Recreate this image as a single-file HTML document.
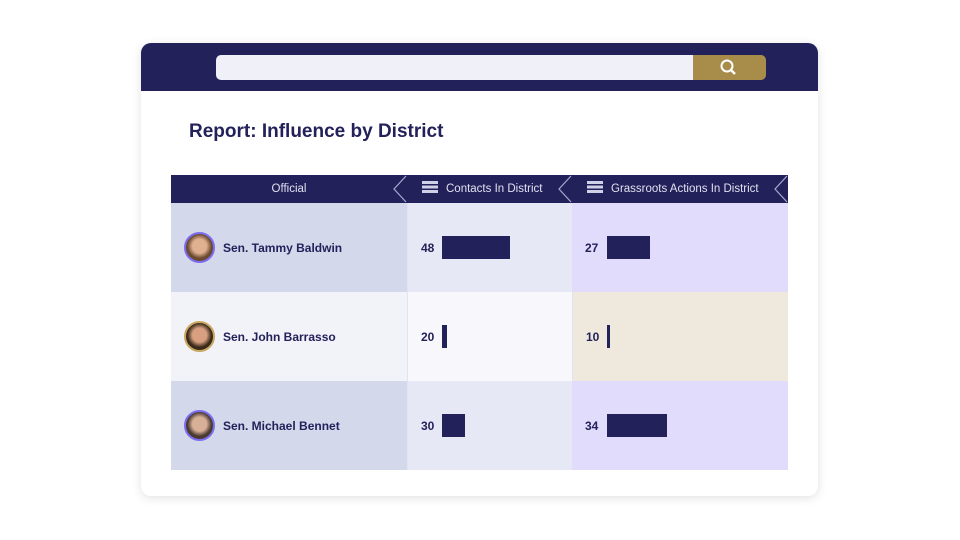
<!DOCTYPE html>
<html><head><style>
*{margin:0;padding:0;box-sizing:border-box}
body{width:960px;height:540px;background:#fff;position:relative;font-family:"Liberation Sans",sans-serif;overflow:hidden}
.card{position:absolute;left:141px;top:43px;width:677px;height:453px;border-radius:10px;background:#fff;box-shadow:0 2px 10px rgba(0,0,0,.12);overflow:hidden}
.top{position:absolute;left:0;top:0;width:100%;height:48px;background:#23215a}
.search{position:absolute;left:75px;top:12px;width:477px;height:25px;background:#f0f0f9;border-radius:5px 0 0 5px}
.btn{position:absolute;left:552px;top:12px;width:73px;height:25px;background:#a88d4a;border-radius:0 5px 5px 0}
h1{position:absolute;left:48px;top:78px;font-size:19px;color:#23215a;font-weight:bold}
.hd{position:absolute;top:175px;height:28px;background:#23215a;color:#e0e0f0;font-size:11.5px;line-height:28px}
.cell{position:absolute;display:flex;align-items:center;font-size:12px;font-weight:bold;color:#23215a}
.bar{position:absolute;background:#23215a;height:23px}
.av{width:31px;height:31px;border-radius:50%;border:2px solid #7b6cf0;margin:0 8px 0 13px;background:radial-gradient(circle at 50% 45%,#e0b090 0 35%,#6b4a30 60%)}
.menu{display:inline-block;width:16px;height:12px;vertical-align:-1px;margin-right:8px;background:linear-gradient(#d0d0e8 0 3px,transparent 3px 4.5px,#d0d0e8 4.5px 7.5px,transparent 7.5px 9px,#d0d0e8 9px 12px)}
</style></head><body>
<div class="card">
<div class="top"><div class="search"></div><div class="btn">
<svg width="73" height="25"><circle cx="34" cy="11" r="5.5" fill="none" stroke="#fff" stroke-width="2"/><line x1="38" y1="15" x2="42" y2="19" stroke="#fff" stroke-width="2.4"/></svg></div></div>
<h1>Report: Influence by District</h1>
</div>
<div class="hd" style="left:171px;width:236px;text-align:center">Official</div>
<div class="hd" style="left:407px;width:165px;padding-left:15px"><span class="menu"></span>Contacts In District</div>
<div class="hd" style="left:572px;width:216px;padding-left:15px"><span class="menu"></span>Grassroots Actions In District</div>
<svg style="position:absolute;left:0;top:0" width="960" height="540"><g fill="none" stroke="#a8a8d0" stroke-width="1.2"><path d="M406 176 L394 189 L406 202"/><path d="M571 176 L559 189 L571 202"/><path d="M787 176 L775 189 L787 202"/></g></svg>

<div class="cell" style="left:171px;top:203px;width:236px;height:89px;background:#d3d9eb"><div class="av"></div>Sen. Tammy Baldwin</div>
<div class="cell" style="left:407px;top:203px;width:165px;height:89px;background:#e6e9f5;padding-left:13px;border-left:1px solid #dfe3f2">48</div>
<div class="cell" style="left:572px;top:203px;width:216px;height:89px;background:#e1dcfb;padding-left:13px">27</div>
<div class="cell" style="left:171px;top:292px;width:236px;height:89px;background:#f2f2f9"><div class="av" style="border-color:#c8a860;background:radial-gradient(circle at 50% 45%,#d8a080 0 35%,#3a2a1a 60%)"></div>Sen. John Barrasso</div>
<div class="cell" style="left:407px;top:292px;width:165px;height:89px;background:#f8f8fc;padding-left:13px;border-left:1px solid #dfe3f2">20</div>
<div class="cell" style="left:572px;top:292px;width:216px;height:89px;background:#efe8dc;padding-left:13px;border-left:1px solid #dfe3f2">10</div>
<div class="cell" style="left:171px;top:381px;width:236px;height:89px;background:#d3d9eb"><div class="av" style="background:radial-gradient(circle at 50% 45%,#d8b098 0 35%,#4a3a30 60%)"></div>Sen. Michael Bennet</div>
<div class="cell" style="left:407px;top:381px;width:165px;height:89px;background:#e6e9f5;padding-left:13px;border-left:1px solid #dfe3f2">30</div>
<div class="cell" style="left:572px;top:381px;width:216px;height:89px;background:#e1dcfb;padding-left:13px">34</div>

<div class="bar" style="left:442px;top:236px;width:68px"></div>
<div class="bar" style="left:607px;top:236px;width:43px"></div>
<div class="bar" style="left:442px;top:325px;width:5px"></div>
<div class="bar" style="left:607px;top:325px;width:3px"></div>
<div class="bar" style="left:442px;top:414px;width:23px"></div>
<div class="bar" style="left:607px;top:414px;width:60px"></div>
</body></html>
